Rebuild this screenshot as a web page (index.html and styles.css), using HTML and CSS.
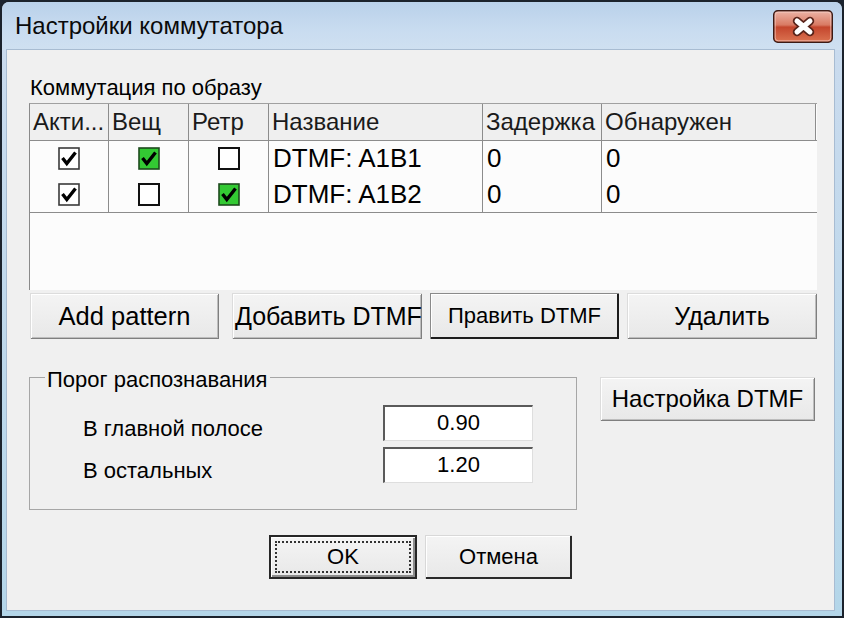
FILE: index.html
```html
<!DOCTYPE html>
<html lang="ru">
<head>
<meta charset="utf-8">
<title>Настройки коммутатора</title>
<link rel="stylesheet" href="styles.css">
</head>
<body>
<div class="window">
  <div class="titlebar">
    <span class="title">Настройки коммутатора</span>
    <svg class="close" width="60" height="33" viewBox="0 0 60 33">
      <defs>
        <linearGradient id="cg" x1="0" y1="0" x2="0" y2="1">
          <stop offset="0" stop-color="#ecb5a8"/>
          <stop offset="0.45" stop-color="#d97a63"/>
          <stop offset="0.52" stop-color="#c4462d"/>
          <stop offset="1" stop-color="#dc7452"/>
        </linearGradient>
      </defs>
      <rect x="0.75" y="0.75" width="58.5" height="31.5" rx="4" fill="url(#cg)" stroke="#3b1b16" stroke-width="1.5"/>
      <rect x="2.2" y="2.2" width="55.6" height="28.6" rx="3" fill="none" stroke="#f6cfc5" stroke-opacity="0.7"/>
      <path d="M24 11 L37 22 M37 11 L24 22" stroke="#5a241a" stroke-width="8.5" stroke-linecap="round"/>
      <path d="M24 11 L37 22 M37 11 L24 22" stroke="#ffffff" stroke-width="5" stroke-linecap="round"/>
    </svg>
  </div>
  <div class="frame">
    <div class="client">
      <div class="caption">Коммутация по образу</div>
      <div class="list">
        <div class="lv-head">
          <div class="hcell">Акти...</div>
          <div class="hcell">Вещ</div>
          <div class="hcell">Ретр</div>
          <div class="hcell">Название</div>
          <div class="hcell">Задержка</div>
          <div class="hcell">Обнаружен</div>
        </div>
        <div class="lv-rows">
          <div class="lv-row">
            <div class="dcell cb">
              <svg class="cbx" width="22" height="23" viewBox="0 0 22 23"><rect x="1" y="1" width="20" height="21" fill="#fff" stroke="#3a3a3a" stroke-width="1.6"/><path d="M4.5 11 L8.8 16.5 L17.5 5.5" fill="none" stroke="#000" stroke-width="3.4"/></svg>
            </div>
            <div class="dcell cb">
              <svg class="cbx" width="22" height="23" viewBox="0 0 22 23"><rect x="1" y="1" width="20" height="21" fill="#33c933" stroke="#1d4a1d" stroke-width="1.6"/><path d="M4.5 11 L8.8 16.5 L17.5 5.5" fill="none" stroke="#000" stroke-width="3.4"/></svg>
            </div>
            <div class="dcell cb">
              <svg class="cbx" width="22" height="23" viewBox="0 0 22 23"><rect x="1" y="1" width="20" height="21" fill="#fff" stroke="#111" stroke-width="2"/></svg>
            </div>
            <div class="dcell">DTMF: A1B1</div>
            <div class="dcell">0</div>
            <div class="dcell last">0</div>
          </div>
          <div class="lv-row">
            <div class="dcell cb">
              <svg class="cbx" width="22" height="23" viewBox="0 0 22 23"><rect x="1" y="1" width="20" height="21" fill="#fff" stroke="#3a3a3a" stroke-width="1.6"/><path d="M4.5 11 L8.8 16.5 L17.5 5.5" fill="none" stroke="#000" stroke-width="3.4"/></svg>
            </div>
            <div class="dcell cb">
              <svg class="cbx" width="22" height="23" viewBox="0 0 22 23"><rect x="1" y="1" width="20" height="21" fill="#fff" stroke="#111" stroke-width="2"/></svg>
            </div>
            <div class="dcell cb">
              <svg class="cbx" width="22" height="23" viewBox="0 0 22 23"><rect x="1" y="1" width="20" height="21" fill="#33c933" stroke="#1d4a1d" stroke-width="1.6"/><path d="M4.5 11 L8.8 16.5 L17.5 5.5" fill="none" stroke="#000" stroke-width="3.4"/></svg>
            </div>
            <div class="dcell">DTMF: A1B2</div>
            <div class="dcell">0</div>
            <div class="dcell last">0</div>
          </div>
        </div>
      </div>
      <div class="btn-row">
        <button class="btn btn-add">Add pattern</button>
        <button class="btn btn-plus">Добавить DTMF</button>
        <button class="btn btn-edit">Править DTMF</button>
        <button class="btn btn-del">Удалить</button>
      </div>
      <div class="mid">
        <fieldset class="group">
          <legend>Порог распознавания</legend>
          <div class="fields">
            <div class="field">
              <span class="lbl">В главной полосе</span>
              <div class="edit">0.90</div>
            </div>
            <div class="field">
              <span class="lbl">В остальных</span>
              <div class="edit">1.20</div>
            </div>
          </div>
        </fieldset>
        <button class="btn btn-dtmf">Настройка DTMF</button>
      </div>
      <div class="dlg-row">
        <button class="btn btn-ok"><span class="focus">OK</span></button>
        <button class="btn btn-cancel">Отмена</button>
      </div>
    </div>
  </div>
</div>
</body>
</html>
```

FILE: styles.css
```css
* { box-sizing: border-box; }
html, body { margin: 0; padding: 0; }
body {
  width: 844px;
  height: 618px;
  overflow: hidden;
  background: #1c2430;
  font-family: "Liberation Sans", Arial, sans-serif;
  color: #000;
}
.window {
  width: 844px;
  height: 618px;
  border: 2px solid #1b222c;
  border-radius: 9px 9px 0 0;
  background: #c3d7ec;
  display: flex;
  flex-direction: column;
  overflow: hidden;
}
.titlebar {
  height: 48px;
  flex: none;
  display: flex;
  align-items: flex-start;
  justify-content: space-between;
  padding: 0 9px 0 13px;
  background: linear-gradient(#b9d1ea, #c9dcf0 60%, #cfe0f1);
}
.title {
  font-size: 24px;
  line-height: 24px;
  margin-top: 12px;
  color: #0a0a0a;
}
.close { margin-top: 8px; flex: none; }
.frame {
  flex: 1;
  display: flex;
  padding: 0 8px 6px 5px;
  background: linear-gradient(#cadbee, #b4d6e9);
}
.client {
  flex: 1;
  background: #f0f0f0;
  box-shadow: 0 0 0 1px #a8bcd2;
  padding: 26px 17px 0 22px;
  display: flex;
  flex-direction: column;
}
.caption {
  font-size: 22px;
  line-height: 24px;
  height: 24px;
  margin: 0 0 3px 1px;
}
.list {
  height: 187px;
  width: 788px;
  flex: none;
  background: #fcfcfc;
  border-top: 1px solid #a0a0a0;
  border-left: 1px solid #8a8a8a;
}
.lv-head, .lv-row {
  display: grid;
  grid-template-columns: 79px 80px 80px 214px 119px 214px;
}
.lv-head { border-bottom: 1px solid #8c8c8c; }
.hcell {
  font-size: 24px;
  line-height: 36px;
  height: 36px;
  padding-left: 3px;
  border-right: 1px solid #8c8c8c;
  background: #efefef;
  white-space: nowrap;
  overflow: hidden;
  color: #1a1a1a;
}
.lv-rows { border-bottom: 1px solid #8c8c8c; }
.lv-row { height: 35.5px; }
.dcell {
  font-size: 26px;
  line-height: 35px;
  padding-left: 4px;
  border-right: 1px solid #8c8c8c;
  display: flex;
  align-items: center;
  white-space: nowrap;
  overflow: hidden;
}
.dcell.last { border-right: 0; }
.dcell.cb { justify-content: center; padding-left: 0; }
.cbx { display: block; }

.btn-row {
  display: flex;
  margin-top: 3px;
  height: 46px;
  flex: none;
}
.btn {
  font-family: "Liberation Sans", Arial, sans-serif;
  font-size: 25px;
  color: #000;
  background: linear-gradient(#f4f4f4, #e8e8e8);
  border: 0;
  padding: 0;
  margin: 0;
  box-shadow: inset 1px 1px 0 #dcdcdc, inset -1px -1px 0 #7f7f7f, inset 2px 2px 0 #ffffff, inset -2px -2px 0 #bdbdbd;
  white-space: nowrap;
  overflow: hidden;
}
.btn-add { width: 189px; margin-left: 1px; font-size: 25.5px; }
.btn-plus { width: 190px; margin-left: 13px; text-align: left; padding-left: 3px; }
.btn-edit {
  width: 189px;
  margin-left: 8px;
  font-size: 22px;
  box-shadow: inset 1px 1px 0 #8a8a8a, inset -2px -2px 0 #1c1c1c, inset 2px 2px 0 #ffffff;
}
.btn-del { width: 190px; margin-left: 8px; }

.mid {
  display: flex;
  align-items: flex-start;
  margin-top: 24px;
  flex: none;
}
.group {
  width: 548px;
  margin: 0;
  padding: 13px 0 26px 0;
  border: 1px solid #a6a6a6;
}
.group legend {
  font-size: 22px;
  line-height: 24px;
  padding: 5px 2px 0;
  margin-left: 15px;
}
.fields { padding-left: 53px; }
.field {
  display: flex;
  align-items: flex-start;
  height: 36px;
}
.field + .field { margin-top: 6px; }
.lbl {
  width: 300px;
  font-size: 22px;
  line-height: 24px;
  padding-top: 12px;
}
.edit {
  width: 150px;
  height: 36px;
  background: #fff;
  border-top: 2px solid #5a5a5a;
  border-left: 2px solid #5a5a5a;
  border-right: 1px solid #dedede;
  border-bottom: 1px solid #dedede;
  font-size: 22px;
  line-height: 32px;
  text-align: center;
}
.btn-dtmf {
  margin: 14px 0 0 23px;
  width: 215px;
  height: 44px;
  font-size: 24px;
}
.dlg-row {
  display: flex;
  margin-top: 25px;
  padding-left: 240px;
  gap: 8px;
  flex: none;
}
.btn-ok {
  width: 148px;
  height: 44px;
  font-size: 22px;
  border: 2px solid #262626;
  padding: 4px;
  box-shadow: inset 1px 1px 0 #ffffff, inset -2px -2px 0 #8d8d8d;
}
.focus {
  display: flex;
  align-items: center;
  justify-content: center;
  width: 100%;
  height: 100%;
  border: 2px dotted #333;
}
.btn-cancel {
  width: 147px;
  height: 44px;
  font-size: 22px;
  box-shadow: inset 1px 1px 0 #d8d8d8, inset -2px -2px 0 #2a2a2a, inset 2px 2px 0 #ffffff;
}
```
